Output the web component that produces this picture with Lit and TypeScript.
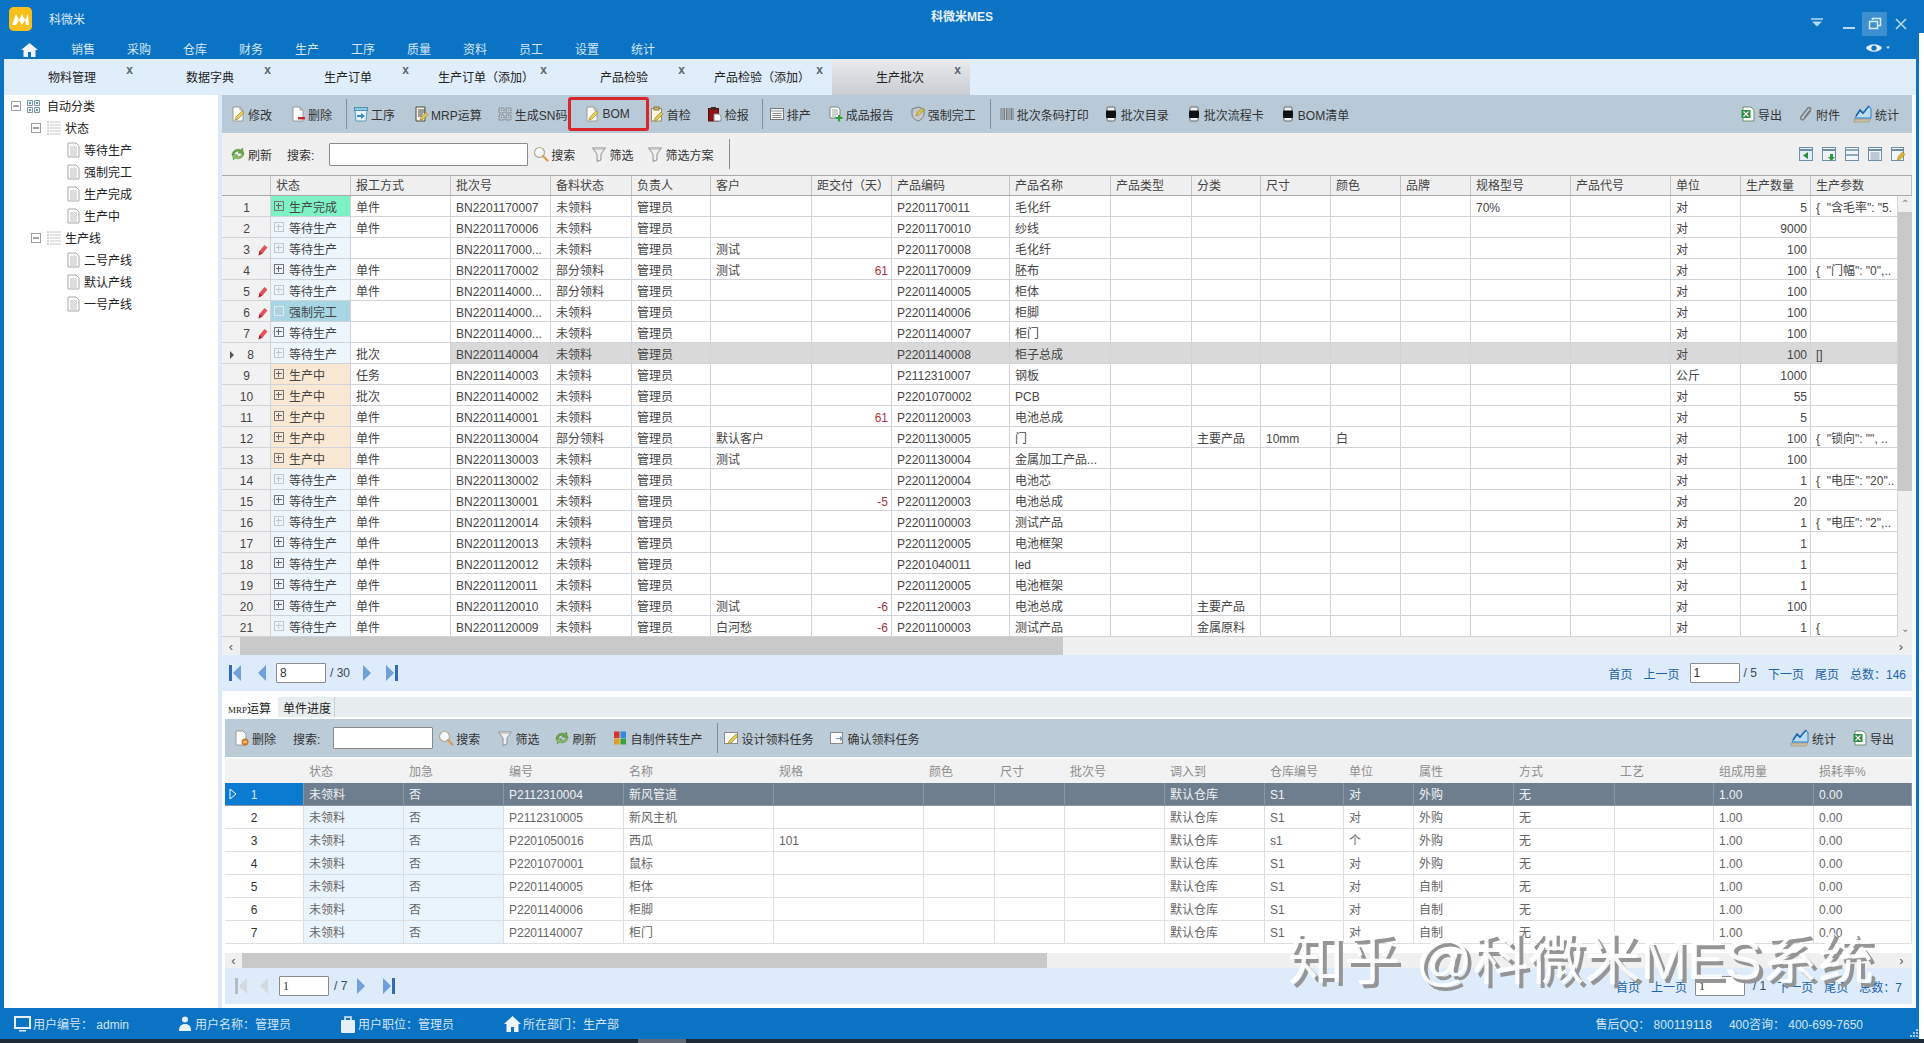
import { LitElement, html, css } from "lit";
import { customElement } from "lit/decorators.js";

const icons: Record<string, any> = {
  doc: html`<svg class="ic" width="16" height="16" viewBox="0 0 16 16"><path d="M2 1h8l3 3v11H2z" fill="#fff" stroke="#a9a9a9"/><path d="M4 5h7M4 7h7M4 9h7M4 11h7M4 13h7" stroke="#bdbdbd"/></svg>`,
  edit: html`<svg class="ic" width="16" height="16" viewBox="0 0 16 16"><path d="M3 1h7l3 3v11H3z" fill="#fdfdf6" stroke="#9a9a9a"/><path d="M10 1v3h3" fill="none" stroke="#9a9a9a"/><path d="M5 14l1-3 6-6 2 2-6 6z" fill="#e8cf5c" stroke="#9c8a2c" stroke-width=".7"/></svg>`,
  del: html`<svg class="ic" width="16" height="16" viewBox="0 0 16 16"><path d="M3 1h7l3 3v11H3z" fill="#fff" stroke="#9a9a9a"/><path d="M10 1v3h3" fill="none" stroke="#9a9a9a"/><rect x="8" y="11" width="7" height="2.4" fill="#c4262e"/></svg>`,
  del2: html`<svg class="ic" width="16" height="16" viewBox="0 0 16 16"><path d="M2 1h7l3 3v11H2z" fill="#fff" stroke="#9a9a9a"/><circle cx="11" cy="12" r="3.2" fill="#e58a2c" stroke="#a85a12" stroke-width=".6"/><path d="M9.4 12h3.2" stroke="#fff"/></svg>`,
  proc: html`<svg class="ic" width="16" height="16" viewBox="0 0 16 16"><path d="M2 4h12l-1 11H3z" fill="#e8f5fa" stroke="#5a9ab8"/><rect x="1.5" y="1.5" width="13" height="3" fill="#8ccbe6" stroke="#4c8fb0"/><path d="M4 9h4V7l4 3-4 3v-2H4z" fill="#2f8fd0"/></svg>`,
  mrp: html`<svg class="ic" width="16" height="16" viewBox="0 0 16 16"><path d="M3 1h9v14H3z" fill="#f3f3ea" stroke="#4a4a3a"/><path d="M5 4h7M5 6h7M5 8h5M5 10h4" stroke="#4a4a3a"/><path d="M7 14l1-2.6 5-5 2 2-5 5z" fill="#e6c94f" stroke="#8c7a28" stroke-width=".6"/></svg>`,
  sn: html`<svg class="ic" width="16" height="16" viewBox="0 0 16 16"><path d="M2 2h5v5H2zM9 2h5v5H9zM2 9h5v5H2zM9 9h5v5H9z" fill="none" stroke="#777" stroke-dasharray="1.4 .8"/><path d="M4 4h1v1H4zM11 4h1v1h-1zM4 11h1v1H4zM11 11h1v1h-1z" fill="#777"/></svg>`,
  clip: html`<svg class="ic" width="16" height="16" viewBox="0 0 16 16"><rect x="2.5" y="2.5" width="10" height="12.5" fill="#fdf8e4" stroke="#9a8c58"/><rect x="5" y="1" width="5" height="3" fill="#c9b878" stroke="#85773f"/><path d="M5 15l1-3 6-6 2 2-6 6z" fill="#e2c94e" stroke="#8c7a28" stroke-width=".6"/></svg>`,
  rep: html`<svg class="ic" width="16" height="16" viewBox="0 0 16 16"><rect x="1.500" y="2.500" width="10" height="12.500" fill="#8e1418" stroke="#5a0a0c"/><rect x="4" y="1" width="5" height="3" fill="#3a2a2a"/><path d="M7 8h5l2 2v5H7z" fill="#fff" stroke="#888"/></svg>`,
  sched: html`<svg class="ic" width="16" height="16" viewBox="0 0 16 16"><rect x="1.500" y="2.500" width="13" height="11" fill="#f7f7f7" stroke="#777"/><path d="M1.500 5h13" stroke="#999"/><path d="M3.500 7.500h9M3.500 9.500h9M3.500 11.500h9" stroke="#8a8a8a"/></svg>`,
  addrep: html`<svg class="ic" width="16" height="16" viewBox="0 0 16 16"><path d="M2 1h8l2 2v9H2V1z" fill="#fff" stroke="#7a8a7a"/><path d="M4 4h6M4 6h6M4 8h6M4 10h4" stroke="#9aa59a"/><path d="M10 9h2v2h2.500v2H12v2.500h-2V13H7.500v-2H10z" fill="#2ea02e"/></svg>`,
  shield: html`<svg class="ic" width="16" height="16" viewBox="0 0 16 16"><path d="M2 3l6-2 6 2v5c0 3.500-3 6-6 7-3-1-6-3.500-6-7z" fill="#c4c8c8" stroke="#77807c"/><path d="M6 10l1-3 5-5 2 2-5 5z" fill="#dcc23f" stroke="#8c7a28" stroke-width=".5"/></svg>`,
  bar: html`<svg class="ic" width="16" height="16" viewBox="0 0 16 16"><path d="M2 2v12M4 2v12M5.500 2v12M7.500 2v12M9 2v12M11 2v12M12.500 2v12M14 2v12" stroke="#6a6a6a" stroke-width=".8"/></svg>`,
  print: html`<svg class="ic" width="16" height="16" viewBox="0 0 16 16"><rect x="4" y="1" width="8" height="14" rx="1" fill="#f0f0f0" stroke="#666"/><rect x="3" y="4.500" width="10" height="7.500" rx="1" fill="#111"/></svg>`,
  excel: html`<svg class="ic" width="16" height="16" viewBox="0 0 16 16"><path d="M3 1h8l3 3v11H3z" fill="#fff" stroke="#6f8f6f"/><rect x="1.500" y="4" width="9" height="8" fill="#2d8a3e"/><path d="M3.500 5.500l5 5M8.500 5.500l-5 5" stroke="#fff" stroke-width="1.200"/></svg>`,
  clipz: html`<svg class="ic" width="16" height="16" viewBox="0 0 16 16"><path d="M12.500 5l-6.500 8c-1.500 1.700-4.500 0-3-2.300l7-8.700c1-1.200 3.300-.2 2.500 1.700L6.500 11.500" fill="none" stroke="#7c7c7c" stroke-width="1.400"/></svg>`,
  chart: html`<svg class="ic" width="20" height="18" viewBox="0 0 20 18"><path d="M1 14h17l-2 3H1z" fill="#c8bfa0" stroke="#8f8668" stroke-width=".5"/><path d="M2 13l5-7 3 3 6-8 2 3v9H2z" fill="#bcdcf4" stroke="#2f7cc4"/><path d="M3 11l4-6 3 3 6-7" fill="none" stroke="#1d68b4" stroke-width="1.500"/></svg>`,
  refresh: html`<svg class="ic" width="16" height="16" viewBox="0 0 16 16"><path d="M2 9a6 6 0 0 1 9-5l1.500-2 1 5.500-5.500-.5 1.500-1.500a4 4 0 0 0-5.500 3z" fill="#6aa84a" stroke="#457a2e" stroke-width=".5"/><path d="M14 7a6 6 0 0 1-9 5l-1.500 2-1-5.500 5.500.5L6.500 10.500a4 4 0 0 0 5.500-3z" fill="#8fbf62" stroke="#457a2e" stroke-width=".5"/></svg>`,
  search: html`<svg class="ic" width="16" height="16" viewBox="0 0 16 16"><circle cx="6.500" cy="6.500" r="5" fill="#f6fafc" stroke="#b7a98a" stroke-width="1.200"/><path d="M10 10l4.500 4.500" stroke="#d99a52" stroke-width="2.200" stroke-linecap="round"/></svg>`,
  filter: html`<svg class="ic" width="16" height="16" viewBox="0 0 16 16"><path d="M1.500 2h13L10 8v6l-4 1.500V8z" fill="#f0f0f0" stroke="#8f8f8f"/><path d="M3 3h10" stroke="#c4c4c4" stroke-width="1.500"/></svg>`,
  bag: html`<svg class="ic" width="16" height="16" viewBox="0 0 16 16"><rect x="2" y="1.500" width="5.500" height="6.500" fill="#d8362c"/><rect x="8.500" y="1.500" width="5.500" height="6.500" fill="#2f8ae0"/><rect x="2" y="8.500" width="5.500" height="6" fill="#e0a020"/><rect x="8.500" y="8.500" width="5.500" height="6" fill="#3aa03a"/></svg>`,
  task: html`<svg class="ic" width="16" height="16" viewBox="0 0 16 16"><rect x="1.500" y="2.500" width="13" height="11" fill="#fafafa" stroke="#8a8a8a"/><path d="M5 14l1-3 7-7 2 2-7 7z" fill="#e2c94e" stroke="#8c7a28" stroke-width=".6"/></svg>`,
  confirm: html`<svg class="ic" width="16" height="16" viewBox="0 0 16 16"><rect x="1.500" y="2.500" width="12" height="11" fill="#fafafa" stroke="#8a8a8a"/><path d="M7 8h4V6l3.500 2.500L11 11V9H7z" fill="#7a9ab8"/></svg>`,
  w1: html`<svg class="ic" width="16" height="16" viewBox="0 0 16 16"><rect x="1.500" y="1.500" width="13" height="13" fill="#e4eef6" stroke="#6f8ea8"/><path d="M1.500 4h13" stroke="#6f8ea8" stroke-width="2"/><path d="M10 6L5 9.500 10 13z" fill="#2c8a3c"/></svg>`,
  w2: html`<svg class="ic" width="16" height="16" viewBox="0 0 16 16"><rect x="1.500" y="1.500" width="13" height="13" fill="#f2f6fa" stroke="#6f8ea8"/><path d="M1.500 4h13" stroke="#6f8ea8" stroke-width="2"/><path d="M9 8h3v3h2l-3.500 4L7 11h2z" fill="#2c9a3c"/></svg>`,
  w3: html`<svg class="ic" width="16" height="16" viewBox="0 0 16 16"><rect x="1.500" y="1.500" width="13" height="13" fill="#f2f6fa" stroke="#6f8ea8"/><path d="M1.500 4h13M1.500 9h13" stroke="#6f8ea8" stroke-width="1.500"/></svg>`,
  w4: html`<svg class="ic" width="16" height="16" viewBox="0 0 16 16"><rect x="1.500" y="1.500" width="13" height="13" fill="#f2f6fa" stroke="#6f8ea8"/><path d="M1.500 4h13" stroke="#6f8ea8" stroke-width="2"/><path d="M3.500 7h9M3.500 9h9M3.500 11h9M3.500 13h9" stroke="#8aa0b4"/></svg>`,
  w5: html`<svg class="ic" width="16" height="16" viewBox="0 0 16 16"><rect x="1.500" y="1.500" width="12" height="13" fill="#f2f6fa" stroke="#6f8ea8"/><path d="M1.500 4h12" stroke="#6f8ea8" stroke-width="2"/><path d="M7 15l1.500-5 4-4 2.500 2.500-4 4z" fill="#e6b32e" stroke="#9c7a18" stroke-width=".5"/></svg>`,
};

type Item = { i?: string; t?: string; m?: number; sep?: boolean; box?: boolean };

const bar1: Item[] = [
  { i: "edit", t: "修改" }, { i: "del", t: "删除", m: 18 }, { sep: true, m: 14 },
  { i: "proc", t: "工序", m: 6 }, { i: "mrp", t: "MRP运算", m: 18 }, { i: "sn", t: "生成SN码", m: 15 },
  { i: "edit", t: "BOM", m: 17, box: true }, { i: "clip", t: "首检", m: 19 }, { i: "rep", t: "检报", m: 16 },
  { sep: true, m: 13 }, { i: "sched", t: "排产", m: 6 }, { i: "addrep", t: "成品报告", m: 17 },
  { i: "shield", t: "强制完工", m: 16 }, { sep: true, m: 14 }, { i: "bar", t: "批次条码打印", m: 8 },
  { i: "print", t: "批次目录", m: 14 }, { i: "print", t: "批次流程卡", m: 17 }, { i: "print", t: "BOM清单", m: 16 },
];
const bar1r: Item[] = [{ i: "excel", t: "导出" }, { i: "clipz", t: "附件", m: 16 }, { i: "chart", t: "统计", m: 13 }];
const bar3a: Item[] = [{ i: "del2", t: "删除" }];
const bar3b: Item[] = [
  { i: "search", t: "搜索", m: 5 }, { i: "filter", t: "筛选", m: 17 }, { i: "refresh", t: "刷新", m: 15 },
  { i: "bag", t: "自制件转生产", m: 16 }, { sep: true, m: 15 }, { i: "task", t: "设计领料任务", m: 5 }, { i: "confirm", t: "确认领料任务", m: 16 },
];
const bar3r: Item[] = [{ i: "chart", t: "统计" }, { i: "excel", t: "导出", m: 16 }];
const bar2b: Item[] = [{ i: "search", t: "搜索", m: 5 }, { i: "filter", t: "筛选", m: 16 }, { i: "filter", t: "筛选方案", m: 14 }, { sep: true, m: 16 }];

const navs = ["销售", "采购", "仓库", "财务", "生产", "工序", "质量", "资料", "员工", "设置", "统计"];
const tabs = ["物料管理", "数据字典", "生产订单", "生产订单（添加）", "产品检验", "产品检验（添加）", "生产批次"];
const topHead = ["", "状态", "报工方式", "批次号", "备料状态", "负责人", "客户", "距交付（天）", "产品编码", "产品名称", "产品类型", "分类", "尺寸", "颜色", "品牌", "规格型号", "产品代号", "单位", "生产数量", "生产参数"];
const botHead = ["", "状态", "加急", "编号", "名称", "规格", "颜色", "尺寸", "批次号", "调入到", "仓库编号", "单位", "属性", "方式", "工艺", "组成用量", "损耗率%"];

type Row = { st: string; cls: string; dark: boolean; pen?: boolean; rep: string; no: string; pre?: string; cus?: string; d?: string; code: string; name: string; cat?: string; size?: string; color?: string; spec?: string; unit?: string; qty: string; par?: string };
const W = "等待生产", P = "生产中";
const topRows: Row[] = [
  { st: "生产完成", cls: "s-done", dark: true, rep: "单件", no: "BN2201170007", code: "P2201170011", name: "毛化纤", spec: "70%", qty: "5", par: '{ \u00a0"含毛率": "5.' },
  { st: W, cls: "s-wait", dark: false, rep: "单件", no: "BN2201170006", code: "P2201170010", name: "纱线", qty: "9000" },
  { st: W, cls: "s-wait", dark: false, pen: true, rep: "", no: "BN220117000...", cus: "测试", code: "P2201170008", name: "毛化纤", qty: "100" },
  { st: W, cls: "s-wait", dark: true, rep: "单件", no: "BN2201170002", pre: "部分领料", cus: "测试", d: "61", code: "P2201170009", name: "胚布", qty: "100", par: '{ \u00a0"门幅": "0",..' },
  { st: W, cls: "s-wait", dark: false, pen: true, rep: "单件", no: "BN220114000...", pre: "部分领料", code: "P2201140005", name: "柜体", qty: "100" },
  { st: "强制完工", cls: "s-force", dark: false, pen: true, rep: "", no: "BN220114000...", code: "P2201140006", name: "柜脚", qty: "100" },
  { st: W, cls: "s-wait", dark: true, pen: true, rep: "", no: "BN220114000...", code: "P2201140007", name: "柜门", qty: "100" },
  { st: W, cls: "s-wait", dark: false, rep: "批次", no: "BN2201140004", code: "P2201140008", name: "柜子总成", qty: "100", par: "[]" },
  { st: P, cls: "s-prod", dark: true, rep: "任务", no: "BN2201140003", code: "P2112310007", name: "钢板", unit: "公斤", qty: "1000" },
  { st: P, cls: "s-prod", dark: true, rep: "批次", no: "BN2201140002", code: "P2201070002", name: "PCB", qty: "55" },
  { st: P, cls: "s-prod", dark: true, rep: "单件", no: "BN2201140001", d: "61", code: "P2201120003", name: "电池总成", qty: "5" },
  { st: P, cls: "s-prod", dark: true, rep: "单件", no: "BN2201130004", pre: "部分领料", cus: "默认客户", code: "P2201130005", name: "门", cat: "主要产品", size: "10mm", color: "白", qty: "100", par: '{ \u00a0"锁向": "", ..' },
  { st: P, cls: "s-prod", dark: true, rep: "单件", no: "BN2201130003", cus: "测试", code: "P2201130004", name: "金属加工产品...", qty: "100" },
  { st: W, cls: "s-wait", dark: false, rep: "单件", no: "BN2201130002", code: "P2201120004", name: "电池芯", qty: "1", par: '{ \u00a0"电压": "20"..' },
  { st: W, cls: "s-wait", dark: true, rep: "单件", no: "BN2201130001", d: "-5", code: "P2201120003", name: "电池总成", qty: "20" },
  { st: W, cls: "s-wait", dark: false, rep: "单件", no: "BN2201120014", code: "P2201100003", name: "测试产品", qty: "1", par: '{ \u00a0"电压": "2",..' },
  { st: W, cls: "s-wait", dark: true, rep: "单件", no: "BN2201120013", code: "P2201120005", name: "电池框架", qty: "1" },
  { st: W, cls: "s-wait", dark: true, rep: "单件", no: "BN2201120012", code: "P2201040011", name: "led", qty: "1" },
  { st: W, cls: "s-wait", dark: true, rep: "单件", no: "BN2201120011", code: "P2201120005", name: "电池框架", qty: "1" },
  { st: W, cls: "s-wait", dark: true, rep: "单件", no: "BN2201120010", cus: "测试", d: "-6", code: "P2201120003", name: "电池总成", cat: "主要产品", qty: "100" },
  { st: W, cls: "s-wait", dark: false, rep: "单件", no: "BN2201120009", cus: "白河愁", d: "-6", code: "P2201100003", name: "测试产品", cat: "金属原料", qty: "1", par: "{" },
];
const botRows = [
  ["P2112310004", "新风管道", "", "S1", "对", "外购"],
  ["P2112310005", "新风主机", "", "S1", "对", "外购"],
  ["P2201050016", "西瓜", "101", "s1", "个", "外购"],
  ["P2201070001", "鼠标", "", "S1", "对", "外购"],
  ["P2201140005", "柜体", "", "S1", "对", "自制"],
  ["P2201140006", "柜脚", "", "S1", "对", "自制"],
  ["P2201140007", "柜门", "", "S1", "对", "自制"],
];

@customElement("app-root")
export class AppRoot extends LitElement {
  static styles = css`
    :host { display: block; width: 1924px; height: 1043px; overflow: hidden; position: relative; background: #fff;
      font: 12px "Liberation Sans", "Noto Sans CJK SC", sans-serif; color: #333; }
    * { box-sizing: border-box; }
    .ic { flex: none; display: block; }
    .title { height: 33px; background: #0b73c4; display: grid; grid-template-columns: 1fr auto 1fr; color: #fff; }
    .brand { display: flex; align-items: flex-start; padding: 7px 0 0 9px; color: #dbe9f5; }
    .brand span { margin: 3px 0 0 17px; }
    .logo { width: 23px; height: 24px; border-radius: 5px; background: #f9c11c; display: block; }
    .appname { padding-top: 7px; font-weight: bold; color: #e8f1f8; }
    .win { display: flex; justify-content: flex-end; align-items: flex-start; padding-right: 17px; }
    .win-menu { margin-top: 18px; }
    .win-min { margin: 27px 0 0 19px; width: 12px; height: 2px; background: #b9d8ef; }
    .win-max { margin: 12px 0 0 7px; width: 25px; height: 24px; background: #3d8fd0; display: flex; align-items: center; justify-content: center; position: relative; z-index: 1; }
    .win-close { margin: 18px 0 0 8px; }
    .nav { width: 1919px; height: 26px; padding: 5px 29px 0 21px; background: #0b73c4; display: flex; align-items: center; color: #d5e6f4; }
    .nav .home { margin-right: 33px; margin-top: 3px; }
    .nav span { width: 24px; margin-right: 32px; flex: none; }
    .nav .eye { margin-left: auto; margin-top: -1px; }
    .tabs-wrap { width: 1919px; padding: 0 3px 0 4px; background: #0b73c4; }
    .tabs { height: 36px; background: #e0edfb; display: flex; padding-left: 0; }
    .tab { width: 138px; flex: none; display: flex; align-items: center; justify-content: center; position: relative; color: #222; white-space: nowrap; padding-right: 2px; }
    .tab span:first-child { margin-top: -2px; }
    .tab.on { background: linear-gradient(#e9ebee, #c9cdd2); }
    .tab .x { position: absolute; top: 5px; right: 9px; font-weight: bold; font-size: 12px; line-height: 12px; color: #5a6670; }
    .main { width: 1919px; height: 913px; padding: 0 3px 0 4px; background: #0b73c4; display: flex; }
    .tree { width: 214px; flex: none; background: #fff; }
    .node { height: 22px; display: flex; align-items: center; color: #222; white-space: nowrap; }
    .node > span:last-child { margin-top: -2px; }
    .l0 { padding-left: 7px; } .l1 { padding-left: 27px; } .l2 { padding-left: 62px; }
    .node .exp { width: 10px; height: 10px; border: 1px solid #9aa0a6; position: relative; flex: none; margin-right: 5px; background: #fff; }
    .node .exp::after { content: ""; position: absolute; left: 1px; right: 1px; top: 3px; height: 2px; background: #666; transform: scaleY(.6); }
    .l0 .ti { margin-right: 6px; }
    .l1 .ti { margin-right: 3px; }
    .l2 .ti { margin-right: 2px; }
    .pane { flex: 1; min-width: 0; background: #fff; border-left: 4px solid #dce9f8; padding-right: 4px; display: flex; flex-direction: column; }
    .bar { height: 38px; background: #b8c9d8; display: flex; align-items: center; flex: none; }
    .bar1 { padding: 0 13px 0 8px; }
    .bar2 { height: 42px; background: #f0f0f0; padding: 0 6px 0 8px; }
    .it { display: flex; align-items: center; gap: 2px; white-space: nowrap; flex: none; color: #333; position: relative; }
    .it.box::after { content: ""; position: absolute; left: -16px; right: -19px; top: -9px; bottom: -9px; border: 3px solid #d9252b; border-radius: 3px; }
    .sep { width: 1px; height: 30px; background: #7f8f9c; flex: none; }
    .spring { margin-left: auto; display: flex; align-items: center; }
    .gap7 { gap: 7px; }
    .lab { margin-left: 15px; flex: none; }
    .lab2 { margin-left: 17px; }
    .inp { border: 1px solid #8a8a8a; background: #fff; flex: none; display: block; padding: 0 3px; line-height: 18px; color: #333; border-radius: 1px; }
    .i199 { width: 199px; height: 23px; margin-left: 15px; }
    .i100 { width: 100px; height: 22px; margin-left: 13px; }
    .i50 { width: 50px; height: 20px; margin: 0 4px 0 10px; }
    .i50b { width: 50px; height: 20px; margin: 0 5px 0 11px; font-family: "Liberation Serif", serif; }
    .pr .i50b { margin: 0 8px 0 8px; }
    .head, .row { display: grid; }
    .tg { grid-template-columns: 49px 80px 100px 100px 81px 79px 101px 80px 118px 101px 81px 69px 70px 70px 70px 100px 100px 70px 70px 101px; }
    .tb { grid-template-columns: 49px 80px 100px 100px 81px 79px 101px 80px 118px 101px 81px 69px 70px 70px 70px 100px 100px 70px 70px 87px; }
    .bg { grid-template-columns: 79px 100px 100px 120px 150px 150px 71px 70px 100px 100px 79px 70px 100px 101px 99px 100px 98px; }
    .head.tg { height: 21px; background: #f0f0f0; border-top: 1px solid #a9a9a9; border-bottom: 1px solid #a9a9a9; flex: none; }
    .head.tg div { padding-left: 5px; border-right: 1px solid #c4c4c4; line-height: 21px; white-space: nowrap; overflow: hidden; color: #444; }
    .tbody { display: flex; height: 441px; flex: none; }
    .rows { flex: 1; min-width: 0; }
    .row.tb { height: 21px; }
    .row.tb > div { border-right: 1px solid #d0d4d8; border-bottom: 1px solid #d0d4d8; line-height: 20px; padding: 2px 0 0 5px; white-space: nowrap; overflow: hidden; color: #454545; }
    .row.tb > .rh { background: #f2f2f2; border-right: 1px solid #d0d4d8; padding: 4px 0 0 0; position: relative; text-align: center; display: flex; align-items: center; justify-content: center; }
    .rh .num { display: block; width: 100%; padding-left: 1px; }
    .rh .num.sel { padding-left: 9px; }
    .rh .pen { position: absolute; right: 2px; top: 6px; }
    .rh .arr { position: absolute; left: 8px; top: 8px; border-left: 4px solid #555; border-top: 4px solid transparent; border-bottom: 4px solid transparent; }
    .row.tb > .st { display: flex; align-items: center; padding: 4px 0 0 3px; gap: 5px; color: #444; }
    .st .bx { width: 10px; height: 10px; border: 1px solid #777; flex: none; position: relative; margin-top: -4px; }
    .st .bx.lite { border-color: #c4c8cc; }
    .s-force .bx.lite { border-color: #dfe9ee; }
    .st .bx::before { content: ""; position: absolute; left: 1px; right: 1px; top: 3px; height: 1px; background: #666; }
    .st .bx::after { content: ""; position: absolute; top: 1px; bottom: 1px; left: 3px; width: 1px; background: #666; }
    .st .bx.lite::before, .st .bx.lite::after { background: #c4c8cc; }
    .row.tb > .s-done { background: #7df3c5; }
    .row.tb > .s-wait { background: #eef6fd; }
    .row.tb > .s-force { background: #a8d6e4; }
    .row.tb > .s-prod { background: #f8e8d4; }
    .row.tb > .sel { background: #d9d9d9; }
    .row.tb > .r { text-align: right; padding: 2px 3px 0 0; }
    .row.tb > .red { color: #a8343c; }
    .vs { width: 14px; flex: none; background: #f0f0f0; display: flex; flex-direction: column; align-items: center; }
    .vs .thumb { width: 14px; height: 279px; background: #c9c9c9; flex: none; }
    .vs .up, .vs .dn { height: 16px; line-height: 16px; color: #777; font-size: 10px; flex: none; text-align: center; }
    .vs .dn { margin-top: auto; }
    .hs { background: #f0f0f0; display: flex; align-items: center; flex: none; }
    .hs .a { text-align: center; color: #555; flex: none; font-size: 13px; }
    .hs .t { background: #c9c9c9; height: 100%; flex: none; }
    .hs1 { height: 18px; }
    .hs1 .a { width: 18px; } .hs1 .t { width: 823px; }
    .hs2 { height: 15px; margin-left: 3px; }
    .hs2 .a { width: 17px; } .hs2 .t { width: 805px; }
    .hs .end { margin-left: auto; margin-right: 2px; }
    .pager { height: 36px; flex: none; background: #ddebfb; display: flex; align-items: center; color: #3a4a5a; }
    .p1 { padding: 0 6px 0 7px; }
    .p2 { padding: 0 10px 0 10px; margin-left: 3px; }
    .nv { flex: none; }
    .g11 { width: 13px; flex: none; } .g14 { width: 15px; flex: none; } .g17 { width: 17px; flex: none; }
    .g13 { width: 13px; flex: none; } .g10 { width: 10px; flex: none; } .g18 { width: 18px; flex: none; }
    .pr { margin-left: auto; display: flex; align-items: center; white-space: nowrap; color: #1e64a8; }
    .pr .of { color: #3a4a5a; }
    .lnk { margin-left: 11px; }
    .count { flex: none; }
    .lower { flex: 1; display: flex; flex-direction: column; margin-top: 6px; }
    .ltabs { height: 20px; background: #e8edf0; display: flex; margin-left: 3px; flex: none; margin-bottom: 2px; }
    .ltab { padding: 0 4px; line-height: 24px; flex: none; color: #222; border-right: 1px solid #c8d0d6; }
    .ltab.on { background: #fff; width: 53px; padding: 0 0 0 3px; height: 22px; position: relative; border: none; white-space: nowrap; overflow: hidden; }
    .ltab.on b { font: 9px "Liberation Serif", serif; }
    .ltab.two { width: 57px; padding-left: 5px; white-space: nowrap; overflow: hidden; }
    .bar3 { margin-left: 3px; padding: 0 18px 0 9px; background: #bccbd8; }
    .head.bgr { margin: 2px 0 0 3px; height: 24px; background: #f2f2f2; flex: none; }
    .head.bgr div { padding-left: 5px; line-height: 26px; color: #8e8e8e; white-space: nowrap; overflow: hidden; }
    .lrows { margin-left: 3px; height: 161px; flex: none; margin-bottom: 9px; }
    .row.bgr { height: 23px; }
    .row.bgr > div { border-right: 1px solid #dcdfe2; border-bottom: 1px solid #dcdfe2; padding-left: 5px; line-height: 24px; white-space: nowrap; overflow: hidden; color: #666; }
    .row.bgr > .rh { text-align: center; color: #333; background: #fff; padding: 0 20px 0 0; position: relative; }
    .row.bgr > .c1 { background: #eaf4fd; }
    .row.bgr.on > div { background: #6f7e8e; color: #eef2f5; border-color: #8996a3; }
    .row.bgr.on > .rh { background: #0b7ad1; color: #cfe8fb; }
    .rh .tri { position: absolute; left: 4px; top: 5px; }
    .status { width: 1919px; height: 31px; background: #0b73c4; color: #d3e5f4; display: flex; align-items: center; padding: 0 56px 0 14px; position: relative; }
    .si { display: flex; align-items: center; gap: 2px; flex: none; white-space: nowrap; }
    .m46 { margin-left: 48px; } .m49 { margin-left: 49px; } .m50 { margin-left: 50px; }
    .sr { margin-left: auto; display: flex; gap: 17px; }
    .grip { position: absolute; right: 1px; bottom: 2px; }
    .dark { height: 4px; background: #1c2a38; display: flex; padding-left: 638px; }
    .dark div { width: 48px; background: #5e6772; }
    .wm { position: absolute; left: 1288px; top: 925px; font: 56px "Liberation Sans", "Noto Sans CJK SC", sans-serif; color: rgba(255,255,255,.92); text-shadow: 4px 4px 0 #959595; white-space: nowrap; pointer-events: none; line-height: 70px; }
    .bottom-gap { height: 4px; flex: none; }
  `;

  private its(list: Item[]) {
    return list.map((x) => {
      const st = x.m ? `margin-left:${x.m}px` : "";
      if (x.sep) return html`<div class="sep" style=${st}></div>`;
      return html`<div class="it ${x.box ? "box" : ""}" style=${st}>${icons[x.i!]}<span>${x.t}</span></div>`;
    });
  }

  private nav(kind: string, off = false) {
    const c = off ? "#b6bcc4" : "#2e6cb8", c2 = off ? "#d6dade" : "#6fa0dc";
    const shapes: Record<string, any> = {
      first: html`<svg class="nv" width="12" height="18" viewBox="0 0 12 18"><rect x="0" y="1" width="3" height="16" fill=${c}/><path d="M12 1v16L4 9z" fill=${c2}/></svg>`,
      prev: html`<svg class="nv" width="8" height="18" viewBox="0 0 8 18"><path d="M8 1v16L0 9z" fill=${c2}/></svg>`,
      next: html`<svg class="nv" width="8" height="18" viewBox="0 0 8 18"><path d="M0 1v16l8-8z" fill=${c2}/></svg>`,
      last: html`<svg class="nv" width="12" height="18" viewBox="0 0 12 18"><path d="M0 1v16l8-8z" fill=${c2}/><rect x="9" y="1" width="3" height="16" fill=${c}/></svg>`,
    };
    return shapes[kind];
  }

  private treeNode(level: number, label: string) {
    if (level === 0)
      return html`<div class="node l0"><span class="exp"></span><svg class="ic ti" width="15" height="15" viewBox="0 0 15 15"><path d="M1.500 1.500h5v5h-5zM8.500 1.500h5v5h-5zM1.500 8.500h5v5h-5zM8.500 8.500h5v5h-5z" fill="#eef3f5" stroke="#7d97a5"/><path d="M3 3h2v2H3zM10 3h2v2h-2zM3 10h2v2H3zM10 10h2v2h-2z" fill="#56a0b8"/></svg><span>${label}</span></div>`;
    if (level === 1)
      return html`<div class="node l1"><span class="exp"></span><svg class="ic ti" width="16" height="16" viewBox="0 0 16 16"><path d="M1 2h2M1 5h2M1 8h2M1 11h2M1 14h2" stroke="#aaa"/><path d="M4 2h11M4 5h11M4 8h11M4 11h11M4 14h11" stroke="#c8c8c8"/></svg><span>${label}</span></div>`;
    return html`<div class="node l2"><span class="ti">${icons.doc}</span><span>${label}</span></div>`;
  }

  private pen() {
    return html`<svg class="pen" width="10" height="12" viewBox="0 0 10 12"><path d="M.5 11.500L1.500 7l5-6 3 2.500-5 6z" fill="#e8505c"/><path d="M.5 11.500L1.500 7l3 2.500z" fill="#a32a36"/></svg>`;
  }

  private topRow(r: Row, i: number) {
    const sel = i === 7 ? "sel" : "";
    const cells = [r.no, r.pre ?? "未领料", "管理员", r.cus ?? ""];
    const tail = [r.code, r.name, "", r.cat ?? "", r.size ?? "", r.color ?? "", "", r.spec ?? "", "", r.unit ?? "对"];
    return html`<div class="row tb">
      <div class="rh">${i === 7 ? html`<i class="arr"></i>` : ""}<span class="num ${i === 7 ? "sel" : ""}">${i + 1}</span>${r.pen ? this.pen() : ""}</div>
      <div class="st ${r.cls}"><i class="bx ${r.dark ? "" : "lite"}"></i><span>${r.st}</span></div>
      <div>${r.rep}</div>
      ${cells.map((c) => html`<div class=${sel}>${c}</div>`)}
      <div class="r red ${sel}">${r.d ?? ""}</div>
      ${tail.map((c) => html`<div class=${sel}>${c}</div>`)}
      <div class="r ${sel}">${r.qty}</div>
      <div class=${sel}>${r.par ?? ""}</div>
    </div>`;
  }

  private botRow(r: string[], i: number) {
    return html`<div class="row bg bgr ${i === 0 ? "on" : ""}">
      <div class="rh">${i === 0 ? html`<svg class="tri" width="8" height="12" viewBox="0 0 8 12"><path d="M1 1v10l6-5z" fill="none" stroke="#fff"/></svg>` : ""}${i + 1}</div>
      <div class="c1">未领料</div><div class="c1">否</div>
      <div>${r[0]}</div><div>${r[1]}</div><div>${r[2]}</div><div></div><div></div><div></div>
      <div>默认仓库</div><div>${r[3]}</div><div>${r[4]}</div><div>${r[5]}</div><div>无</div><div></div><div>1.00</div><div>0.00</div>
    </div>`;
  }

  render() {
    return html`
      <div class="title">
        <div class="brand">
          <svg class="logo" viewBox="0 0 23 24"><rect width="23" height="24" rx="5" fill="#f9bf1a"/><path d="M3 18L7 7l3 6 3-6 3 6 3-6 1 11h-3l-1-5-3 5-3-5-3 5z" fill="#fff"/></svg>
          <span>科微米</span>
        </div>
        <div class="appname">科微米MES</div>
        <div class="win">
          <svg class="ic win-menu" width="14" height="9" viewBox="0 0 14 9"><path d="M1 1h12" stroke="#b9d8ef" stroke-width="1.500"/><path d="M2 3.500h10L7 8.500z" fill="#b9d8ef"/></svg>
          <div class="win-min"></div>
          <div class="win-max"><svg class="ic" width="14" height="14" viewBox="0 0 14 14"><path d="M4.500 3V1.500h8v7H10" fill="none" stroke="#d8ebf8" stroke-width="1.500"/><rect x="1.500" y="4.500" width="8" height="7" fill="none" stroke="#d8ebf8" stroke-width="1.500"/></svg></div>
          <svg class="ic win-close" width="12" height="12" viewBox="0 0 12 12"><path d="M1 1l10 10M11 1L1 11" stroke="#b9d8ef" stroke-width="1.600"/></svg>
        </div>
      </div>
      <div class="nav">
        <svg class="ic home" width="17" height="14" viewBox="0 0 17 14"><path d="M8.500 0L17 7h-2.500v7H10V9H7v5H2.500V7H0z" fill="#f2f6fa"/></svg>
        ${navs.map((n) => html`<span>${n}</span>`)}
        <svg class="ic eye" width="24" height="12" viewBox="0 0 24 12"><path d="M0 6c3-5 13-5 16 0-3 5-13 5-16 0z" fill="#e6f0f8"/><circle cx="8" cy="6" r="2.600" fill="#0b73c4"/><path d="M20 4.500h4L22 7z" fill="#cfe3f3"/></svg>
      </div>
      <div class="tabs-wrap"><div class="tabs">
        ${tabs.map((t, i) => html`<div class="tab ${i === 6 ? "on" : ""}"><span>${t}</span><span class="x">x</span></div>`)}
      </div></div>
      <div class="main">
        <div class="tree">
          ${this.treeNode(0, "自动分类")}
          ${this.treeNode(1, "状态")}
          ${["等待生产", "强制完工", "生产完成", "生产中"].map((t) => this.treeNode(2, t))}
          ${this.treeNode(1, "生产线")}
          ${["二号产线", "默认产线", "一号产线"].map((t) => this.treeNode(2, t))}
        </div>
        <div class="pane">
          <div class="bar bar1">
            ${this.its(bar1)}
            <div class="spring">${this.its(bar1r)}</div>
          </div>
          <div class="bar bar2">
            <div class="it">${icons.refresh}<span>刷新</span></div>
            <span class="lab">搜索:</span>
            <div class="inp i199"></div>
            ${this.its(bar2b)}
            <div class="spring gap7">${icons.w1}${icons.w2}${icons.w3}${icons.w4}${icons.w5}</div>
          </div>
          <div class="head tg">${topHead.map((h) => html`<div>${h}</div>`)}</div>
          <div class="tbody">
            <div class="rows">${topRows.map((r, i) => this.topRow(r, i))}</div>
            <div class="vs"><div class="up">⌃</div><div class="thumb"></div><div class="dn">⌄</div></div>
          </div>
          <div class="hs hs1"><div class="a">‹</div><div class="t"></div><div class="a end">›</div></div>
          <div class="pager p1">
            ${this.nav("first")}<span class="g17"></span>${this.nav("prev")}
            <div class="inp i50">8</div><span class="count">/ 30</span>
            <span class="g11"></span>${this.nav("next")}<span class="g14"></span>${this.nav("last")}
            <div class="pr"><span>首页</span><span class="lnk">上一页</span><div class="inp i50">1</div><span class="of">/ 5</span><span class="lnk">下一页</span><span class="lnk">尾页</span><span class="lnk">总数：146</span></div>
          </div>
          <div class="lower">
            <div class="ltabs"><div class="ltab on"><b>MRP</b>运算</div><div class="ltab two">单件进度</div></div>
            <div class="bar bar3">
              ${this.its(bar3a)}
              <span class="lab lab2">搜索:</span>
              <div class="inp i100"></div>
              ${this.its(bar3b)}
              <div class="spring">${this.its(bar3r)}</div>
            </div>
            <div class="head bg bgr">${botHead.map((h) => html`<div>${h}</div>`)}</div>
            <div class="lrows">${botRows.map((r, i) => this.botRow(r, i))}</div>
            <div class="hs hs2"><div class="a">‹</div><div class="t"></div><div class="a end">›</div></div>
            <div class="pager p2">
              ${this.nav("first", true)}<span class="g13"></span>${this.nav("prev", true)}
              <div class="inp i50b">1</div><span class="count">/ 7</span>
              <span class="g10"></span>${this.nav("next")}<span class="g18"></span>${this.nav("last")}
              <div class="pr"><span>首页</span><span class="lnk">上一页</span><div class="inp i50b">1</div><span class="of">/ 1</span><span class="lnk">下一页</span><span class="lnk">尾页</span><span class="lnk">总数：7</span></div>
            </div>
            <div class="bottom-gap"></div>
          </div>
        </div>
      </div>
      <div class="status">
        <div class="si"><svg class="ic" width="17" height="16" viewBox="0 0 17 16"><rect x="1" y="1" width="15" height="11" fill="none" stroke="#e6f0f8" stroke-width="2"/><path d="M5 14h7v1.500H5z" fill="#e6f0f8"/></svg><span>用户编号： admin</span></div>
        <div class="si m46"><svg class="ic" width="16" height="16" viewBox="0 0 16 16"><circle cx="8" cy="3.500" r="3" fill="#e6f0f8"/><path d="M2 15c0-5 2-7 6-7s6 2 6 7z" fill="#e6f0f8"/></svg><span>用户名称：管理员</span></div>
        <div class="si m49"><svg class="ic" width="16" height="18" viewBox="0 0 16 18"><rect x="1" y="5" width="14" height="13" rx="1" fill="#e6f0f8"/><path d="M5 5V2h6v3" fill="none" stroke="#e6f0f8" stroke-width="1.500"/></svg><span>用户职位：管理员</span></div>
        <div class="si m50"><svg class="ic" width="17" height="16" viewBox="0 0 17 16"><path d="M8.500 0L17 8h-2.500v8H10v-5H7v5H2.500V8H0z" fill="#f0f5fa"/></svg><span>所在部门：生产部</span></div>
        <div class="sr"><span>售后QQ： 800119118</span><span>400咨询： 400-699-7650</span></div>
        <svg class="grip" width="8" height="8" viewBox="0 0 8 8"><path d="M6 0h2v2H6zM3 3h2v2H3zM6 3h2v2H6zM0 6h2v2H0zM3 6h2v2H3zM6 6h2v2H6z" fill="#9cc8ea"/></svg>
      </div>
      <div class="dark"><div></div></div>
      <div class="wm">知乎 @科微米MES系统</div>
    `;
  }
}
